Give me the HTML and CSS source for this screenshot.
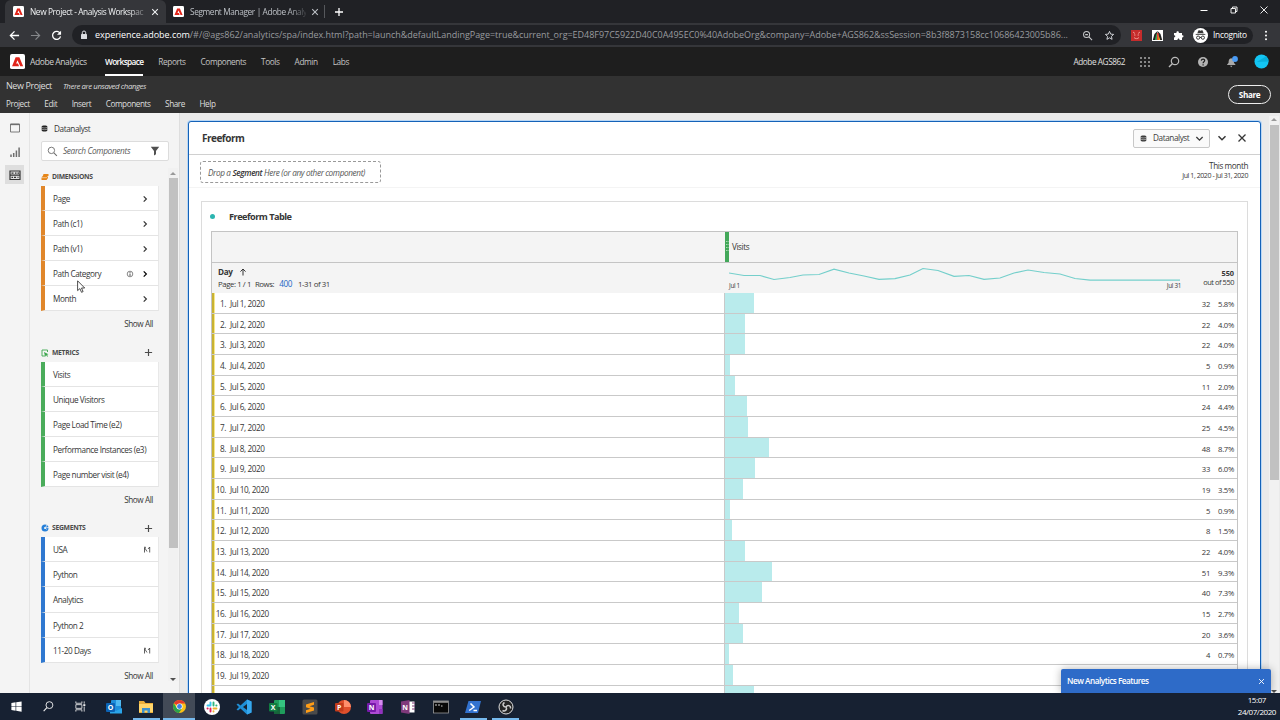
FILE: index.html
```html
<!DOCTYPE html>
<html lang="en">
<head>
    <meta charset="UTF-8">
    <meta name="viewport" content="width=device-width, initial-scale=1.0">
    <title>New Project - Analysis Workspace</title>
    <link rel="stylesheet" href="styles.css">
</head>
<body>
    <!-- shared icons -->
    <svg class="defs" width="0" height="0">
        <symbol id="adobe" viewBox="0 0 16 16">
            <rect width="16" height="16" rx="2" fill="#fff"/>
            <path d="M6 3.500h4l4 9.500h-3L8 6.600 6.500 10h2l1.200 3H2.200z" fill="#e1251b"/>
        </symbol>
        <symbol id="close" viewBox="0 0 10 10"><path d="M1.500 1.500l7 7M8.500 1.500l-7 7" fill="none" stroke="currentColor" stroke-width="1.300"/></symbol>
        <symbol id="plus" viewBox="0 0 10 10"><path d="M5 1v8M1 5h8" fill="none" stroke="currentColor" stroke-width="1.300"/></symbol>
        <symbol id="right" viewBox="0 0 8 8"><path d="M2.700 1.300l2.700 2.700-2.700 2.700" fill="none" stroke="currentColor" stroke-width="1.200"/></symbol>
        <symbol id="down" viewBox="0 0 10 10"><path d="M1.500 3.300L5 6.800l3.500-3.500" fill="none" stroke="currentColor" stroke-width="1.500"/></symbol>
        <symbol id="data" viewBox="0 0 8 8">
            <path d="M.8 1.700C.8.200 7.200.200 7.200 1.700v4.600c0 1.500-6.400 1.500-6.400 0z" fill="currentColor"/>
            <path d="M1 2.800c1.500.7 4.500.7 6 0M1 4.800c1.500.7 4.500.7 6 0" fill="none" stroke="#f4f4f4" stroke-width=".6"/>
        </symbol>
        <symbol id="badge" viewBox="0 0 8 8"><path d="M1.500 6.500V1.500L4 5.500M5 3l1.700-2v5.500M1.500 1l1.500.5" fill="none" stroke="currentColor" stroke-width=".8"/></symbol>
    </svg>

    <div class="tab-strip">
        <div class="tab active">
            <svg class="favicon"><use href="#adobe"/></svg>
            <span class="tab-title">New Project - Analysis Workspac</span>
            <svg class="tab-close"><use href="#close"/></svg>
        </div>
        <div class="tab">
            <svg class="favicon"><use href="#adobe"/></svg>
            <span class="tab-title">Segment Manager | Adobe Analy</span>
            <svg class="tab-close"><use href="#close"/></svg>
        </div>
        <i class="tab-divider"></i>
        <svg class="new-tab"><use href="#plus"/></svg>
        <div class="window-buttons">
            <svg viewBox="0 0 10 10"><path d="M1.500 5.500h7" stroke="#fff"/></svg>
            <svg viewBox="0 0 10 10"><path d="M2 3.500h4.500V8H2zM3.500 3.500V2H8v4.500H6.500" fill="none" stroke="#fff" stroke-width=".9"/></svg>
            <svg viewBox="0 0 10 10"><path d="M1.500 1.500l7 7M8.500 1.500l-7 7" stroke="#fff" stroke-width=".9"/></svg>
        </div>
    </div>

    <div class="toolbar">
        <svg class="nav-icon" viewBox="0 0 12 12"><path d="M11 6H1.800M6 1.500L1.500 6 6 10.500" fill="none" stroke="#fff" stroke-width="1.400"/></svg>
        <svg class="nav-icon" viewBox="0 0 12 12"><path d="M1 6h9.200M6 1.500L10.500 6 6 10.500" fill="none" stroke="#85878a" stroke-width="1.300"/></svg>
        <svg class="nav-icon" viewBox="0 0 12 12"><path d="M10 3.800A4.400 4.400 0 1 0 10.400 7" fill="none" stroke="#fff" stroke-width="1.400"/><path d="M11 .8v4.500H6.500z" fill="#fff"/></svg>
        <div class="address">
            <svg class="lock" viewBox="0 0 8 10"><rect x="1" y="4" width="6" height="5" rx=".6" fill="#dadce0"/><path d="M2.300 4V2.700a1.700 1.700 0 0 1 3.400 0V4" fill="none" stroke="#dadce0"/></svg>
            <span class="url"><b>experience.adobe.com</b>/#/@ags862/analytics/spa/index.html?path=launch&amp;defaultLandingPage=true&amp;current_org=ED48F97C5922D40C0A495EC0%40AdobeOrg&amp;company=Adobe+AGS862&amp;ssSession=8b3f8873158cc10686423005b86...</span>
            <svg class="zoom" viewBox="0 0 12 12"><circle cx="5" cy="5" r="3.300" fill="none" stroke="#c8c9cb" stroke-width="1.100"/><path d="M7.500 7.500L11 11M3.500 5h3" stroke="#c8c9cb" stroke-width="1.200"/></svg>
            <svg class="star" viewBox="0 0 12 12"><path d="M6 1.500l1.300 3 3.200.3-2.400 2.200.7 3.200L6 8.500l-2.800 1.700.7-3.200L1.500 4.800l3.200-.3z" fill="none" stroke="#dadce0"/></svg>
        </div>
        <svg class="ext" viewBox="0 0 11 11"><rect width="11" height="11" fill="#c62c2c"/><path d="M2 2l2 1.500M9 2L7 3.500M3 5h1.500M6.500 5H8M3 7.500c1 1.500 4 1.500 5 0" fill="none" stroke="#f0a09b" stroke-width=".9"/></svg>
        <svg class="ext" viewBox="0 0 11 11"><rect width="11" height="11" fill="#fff"/><path d="M5.500 1L2.500 4 .8 10H4z" fill="#222"/><path d="M5.500 1l3 3 1.700 6H7z" fill="#222"/><path d="M5 3v7H3l1-5z" fill="#38a853"/><path d="M5 3h1.500l.7 7H5z" fill="#eb4335"/><path d="M6.500 5l1.700 5h-1.500z" fill="#fabc05"/></svg>
        <svg class="ext" viewBox="0 0 11 11"><path d="M1 3h2.500c-.8-2.300 3-2.300 2.300 0H9v2.400c2-.7 2 2.500 0 2V10H6.500c.2-2-2.200-2-2 0H1V7.500c1.800 0 1.800-2.200 0-2.200z" fill="#fff"/></svg>
        <div class="incognito">
            <svg viewBox="0 0 14 14"><circle cx="7" cy="7" r="7" fill="#fff"/><path d="M4.500 5l.8-2.500 1.700.4 1.700-.4.8 2.500M2.500 6h9" fill="#333" stroke="#333" stroke-width=".8"/><circle cx="4.800" cy="9" r="1.500" fill="none" stroke="#333" stroke-width=".9"/><circle cx="9.200" cy="9" r="1.500" fill="none" stroke="#333" stroke-width=".9"/><path d="M6.300 8.800h1.400" stroke="#333"/></svg>
            <span>Incognito</span>
        </div>
        <svg class="kebab" viewBox="0 0 4 12"><circle cx="2" cy="2" r="1.100"/><circle cx="2" cy="6" r="1.100"/><circle cx="2" cy="10" r="1.100"/></svg>
    </div>

    <header class="app-header">
        <svg class="app-logo"><use href="#adobe"/></svg>
        <span class="app-name">Adobe Analytics</span>
        <nav class="app-nav">
            <a class="selected">Workspace</a>
            <a>Reports</a>
            <a>Components</a>
            <a>Tools</a>
            <a>Admin</a>
            <a>Labs</a>
        </nav>
        <span class="org">Adobe AGS862</span>
        <div class="header-icons">
            <svg viewBox="0 0 12 12"><path d="M1 2h2M5 2h2M9 2h2M1 6h2M5 6h2M9 6h2M1 10h2M5 10h2M9 10h2" stroke="#aaa" stroke-width="1.600"/></svg>
            <svg viewBox="0 0 12 12"><circle cx="7" cy="5" r="3.700" fill="none" stroke="#bbb" stroke-width="1.200"/><path d="M4.300 7.700L1 11" stroke="#bbb" stroke-width="1.400"/></svg>
            <svg viewBox="0 0 12 12"><circle cx="6" cy="6" r="5" fill="#b4b4b4"/><path d="M4.300 4.600c.2-2 3.500-2 3.400 0C7.700 5.800 6.100 5.800 6.100 7.200M6.100 8.200v1.300" fill="none" stroke="#1e1e1e" stroke-width="1.200"/></svg>
            <svg viewBox="0 0 14 14"><path d="M1 10.500l2-2.500c0-3 .5-5 3-5.500 2.800.5 3.300 2.500 3.300 5.500l2 2.500z" fill="#aaa"/><path d="M4.700 11.500h2.800l-1.400 1.500z" fill="#aaa"/><circle cx="10.500" cy="3.500" r="3.400" fill="#4b9cf5"/></svg>
            <svg class="avatar" viewBox="0 0 16 16"><circle cx="8" cy="8" r="7.500" fill="#13c5f3"/><path d="M3 8.500L13 2.500a7.500 7.500 0 0 1 2.500 5.500z" fill="#08afdc"/></svg>
        </div>
    </header>

    <div class="project-bar">
        <div class="project-info">
            <div class="project-title"><span>New Project</span><em>There are unsaved changes</em></div>
            <nav class="menu">
                <a>Project</a>
                <a>Edit</a>
                <a>Insert</a>
                <a>Components</a>
                <a>Share</a>
                <a>Help</a>
            </nav>
        </div>
        <button class="share">Share</button>
    </div>

    <main class="workspace">
        <div class="rail">
            <div class="rail-btn"><svg viewBox="0 0 12 12"><path d="M1.500 2h9v8h-9z" fill="none" stroke="#6e6e6e" stroke-width=".9"/><path d="M1.500 2.500h9" stroke="#6e6e6e" stroke-width="1.300"/></svg></div>
            <div class="rail-btn"><svg viewBox="0 0 12 12"><path d="M2 8.500V11M4.700 7v4M7.400 4.500V11M10.100 1.500V11" stroke="#6e6e6e" stroke-width="1.500"/></svg></div>
            <div class="rail-btn on"><svg viewBox="0 0 12 12"><path d="M1 2h10v8.500H1zM1 6.200h10" fill="none" stroke="#333" stroke-width="1.200"/><path d="M2.500 4.200h2M6 4.200h1.500M8.500 4.200h1.500M2.500 8.300h1.500M5 8.300h2M8.500 8.300h1" stroke="#333" stroke-width="1.300"/></svg></div>
        </div>

        <aside class="components">
            <div class="suite"><svg><use href="#data"/></svg>Datanalyst</div>
            <div class="search">
                <svg class="search-icon" viewBox="0 0 12 12"><circle cx="4.800" cy="4.800" r="3.500" fill="none" stroke="#6e6e6e"/><path d="M7.500 7.500l3.300 3.300" stroke="#6e6e6e" stroke-width="1.100"/></svg>
                <em>Search Components</em>
                <svg class="filter" viewBox="0 0 10 10"><path d="M.8.800h8.400L6 5v3.200L4 9.600V5z" fill="#505050"/></svg>
            </div>
            <div class="component-scroll">
                <div class="sections">
                    <section class="dimensions">
                        <h4><svg viewBox="0 0 8 8"><path d="M2.500 1h5v1.500L6 4H1.500z" fill="#e68619"/><path d="M1 3.500l6-.5v2L5.500 7H.5V5.500z" fill="#e68619"/><path d="M1 4.700h4.500l1.300-1.500" fill="none" stroke="#fff" stroke-width=".5"/></svg>DIMENSIONS</h4>
                        <ul>
                            <li>Page<svg class="go"><use href="#right"/></svg></li>
                            <li>Path (c1)<svg class="go"><use href="#right"/></svg></li>
                            <li>Path (v1)<svg class="go"><use href="#right"/></svg></li>
                            <li class="hover">Path Category<svg class="info" viewBox="0 0 8 8"><circle cx="4" cy="4" r="2.800" fill="none" stroke="#555" stroke-width=".7"/><path d="M4 2v.9M4 3.500V6" stroke="#555"/></svg><svg class="go"><use href="#right"/></svg></li>
                            <li>Month<svg class="go"><use href="#right"/></svg></li>
                        </ul>
                        <a class="show-all">Show All</a>
                    </section>
                    <section class="metrics">
                        <h4><svg viewBox="0 0 8 8"><path d="M4.500 7H1V1h5.500v2" fill="none" stroke="#3da74e" stroke-width=".9"/><path d="M3 3l4.500 2.200-1.500.6 1 1.500-.8.500-1-1.500-1.200 1z" fill="#3da74e"/></svg>METRICS<svg class="add"><use href="#plus"/></svg></h4>
                        <ul>
                            <li>Visits</li>
                            <li>Unique Visitors</li>
                            <li>Page Load Time (e2)</li>
                            <li>Performance Instances (e3)</li>
                            <li>Page number visit (e4)</li>
                        </ul>
                        <a class="show-all">Show All</a>
                    </section>
                    <section class="segments">
                        <h4><svg viewBox="0 0 8 8"><circle cx="4" cy="4" r="3.500" fill="#2680d9"/><path d="M4.500 3.500L6.500.2M4 4l4-.5M4 4l1.500 1.500" stroke="#f4f4f4" stroke-width=".8"/><circle cx="4" cy="4" r="1" fill="#f4f4f4"/></svg>SEGMENTS<svg class="add"><use href="#plus"/></svg></h4>
                        <ul>
                            <li>USA<svg class="adobe-badge"><use href="#badge"/></svg></li>
                            <li>Python</li>
                            <li>Analytics</li>
                            <li>Python 2</li>
                            <li>11-20 Days<svg class="adobe-badge"><use href="#badge"/></svg></li>
                        </ul>
                        <a class="show-all">Show All</a>
                    </section>
                </div>
                <div class="scrollbar"><i class="up"></i><div class="thumb"></div><i class="dn"></i></div>
            </div>
        </aside>

        <div class="canvas">
            <div class="panel">
                <div class="panel-head">
                    <h2>Freeform</h2>
                    <button class="suite-picker"><svg class="data"><use href="#data"/></svg>Datanalyst<svg class="caret"><use href="#down"/></svg></button>
                    <svg class="collapse"><use href="#down"/></svg>
                    <svg class="dismiss"><use href="#close"/></svg>
                </div>
                <div class="panel-filters">
                    <div class="drop-zone">Drop a <b>Segment</b> Here (or any other component)</div>
                    <div class="date-range"><span>This month</span><small>Jul 1, 2020 - Jul 31, 2020</small></div>
                </div>
                <div class="viz">
                    <div class="viz-title"><i></i>Freeform Table</div>
                    <div class="table">
                        <div class="columns">
                            <div></div>
                            <div class="metric"><svg viewBox="0 0 4 30"><rect width="4" height="30" fill="#43a85a"/><path d="M1.500 9v12M3 9v12" stroke="#d6eeda" stroke-width=".7" stroke-dasharray="1 2"/></svg>Visits</div>
                        </div>
                        <div class="summary">
                            <div class="day-head">
                                <div><b>Day</b><svg viewBox="0 0 8 8"><path d="M4 7.500V1.200M1.500 3.600L4 1l2.500 2.600" fill="none" stroke="#333"/></svg></div>
                                <div class="paging"><span>Page: 1 / 1</span><span>Rows:</span><a>400</a><span>1-31 of 31</span></div>
                            </div>
                            <div class="trend">
                                <div class="spark">
                                    <svg viewBox="0 0 452 16"><polyline points="0,6 15,8.500 31,8.500 45,12.500 61,10.500 74,8 90,7.500 105,2.200 120,6 135,9 150,12.300 166,11.700 181,8 194,1.500 209,3.500 225,9.300 240,8.500 255,12.300 271,11 285,6 299,3 315,5.500 331,7 346,11.500 361,13.200 451,13.200" fill="none" stroke="#74cfcb" stroke-width="1.200"/></svg>
                                    <div class="spark-labels"><span>Jul 1</span><span>Jul 31</span></div>
                                </div>
                                <div class="total"><b>550</b><span>out of 550</span></div>
                            </div>
                        </div>
                        <div id="rows"></div>
                    </div>
                </div>
            </div>
            <div class="scrollbar"><i class="up"></i><div class="thumb"></div><i class="dn"></i></div>
            <div class="toast">New Analytics Features<svg><use href="#close"/></svg></div>
        </div>
    </main>

    <footer class="taskbar">
        <div class="app"><svg viewBox="0 0 14 14"><path d="M1.500 3.200l4.500-.7v4.200H1.500zM6.700 2.400l5.800-.9v5.200H6.700zM1.500 7.400H6v4.200l-4.500-.7zM6.700 7.400h5.800v5.200l-5.800-.9z" fill="#fff"/></svg></div>
        <div class="app"><svg viewBox="0 0 14 14"><circle cx="8" cy="5.500" r="3.700" fill="none" stroke="#eee"/><path d="M5.300 8.300L1.800 12" stroke="#eee" stroke-width="1.200"/></svg></div>
        <div class="app task-view"><svg viewBox="0 0 14 14"><path d="M2 1.500v2h6.500v-2M2 12.500v-2h6.500v2M2 5h6.500v4H2zM11 1.500v2.500M11 7v5.500" fill="none" stroke="#eee" stroke-width=".9"/><path d="M10 4.500h2.200v2H10z" fill="#eee"/></svg></div>
        <div class="app"><svg class="wide" viewBox="0 0 16 16"><rect x="5" y="1" width="10" height="13" rx="1" fill="#1f8fdb"/><rect x="10" y="1" width="5" height="6" fill="#50b9f0"/><path d="M4 9l6 3 6-3v5.500H4z" fill="#2aa5ea"/><rect x="0" y="4" width="9" height="9" rx="1" fill="#0c63b5"/><text x="4.500" y="11" class="ico">O</text></svg></div>
        <div class="app running"><svg class="wide" viewBox="0 0 16 16"><path d="M1 2h5l1.500 2H15v10H1z" fill="#e9ae3c"/><path d="M1 5h14v8H1z" fill="#ffd56b"/><path d="M4 14V9h8v5h-2.500v-2.500h-3V14z" fill="#3d91ce"/></svg></div>
        <div class="app running current"><svg viewBox="0 0 14 14"><circle cx="7" cy="7" r="7" fill="#fbc116"/><path d="M7 7L.9 3.600A7 7 0 0 1 13.200 3.800H7z" fill="#e33b2e"/><path d="M.9 3.600A7 7 0 0 0 6.400 14L10 8.500 7 10 4 8.500z" fill="#2ba24c"/><circle cx="7" cy="7" r="3.300" fill="#fff"/><circle cx="7" cy="7" r="2.600" fill="#3f7fe8"/></svg></div>
        <div class="app"><svg class="wide" viewBox="0 0 16 16"><circle cx="8" cy="8" r="8" fill="#fff"/><g stroke-width="1.900" stroke-linecap="round"><path d="M6.500 3.500v3M3.500 6.500h3" stroke="#36c5f0"/><path d="M9.500 3.500v3M12.500 6.500h-.2" stroke="#2eb67d"/><path d="M9.500 9.500h3M9.500 12.500v-.2" stroke="#ecb22e"/><path d="M6.500 9.500v3M3.500 9.500h.2" stroke="#e01e5a"/></g></svg></div>
        <div class="app"><svg class="wide" viewBox="0 0 16 16"><path d="M11 .5L4.500 6.500 2 4.500.5 5.500 3 8 .5 10.500l1.500 1L4.500 9.500l6.500 6 4.500-2v-11z" fill="#1f8fd6"/><path d="M11 5L7 8l4 3z" fill="#172230"/><path d="M11 .5l4.500 2v11l-4.500 2z" fill="#37a8ee"/></svg></div>
        <div class="app"><svg class="wide" viewBox="0 0 16 16"><rect x="5" y="1" width="11" height="14" rx="1" fill="#1f9d5c"/><path d="M10 1h6v7h-6z" fill="#35c481"/><path d="M5 8h6v7H5z" fill="#17643a"/><rect y="4" width="8.500" height="8.500" rx="1" fill="#107c41"/><text x="4.200" y="11" class="ico">X</text></svg></div>
        <div class="app"><svg class="wide" viewBox="0 0 16 16"><rect x=".5" y=".5" width="15" height="15" rx="1.500" fill="#4a4a4a"/><path d="M4 5.500L12 3v2.700L7.500 7.200 12 8.600v2.900L4 14v-2.700l4.500-1.500L4 8.300z" fill="#ff9d16"/></svg></div>
        <div class="app"><svg class="wide" viewBox="0 0 16 16"><circle cx="9" cy="8" r="7" fill="#e0502c"/><path d="M9 1a7 7 0 0 1 7 7H9z" fill="#ff8f6b"/><rect y="4" width="8.500" height="8.500" rx="1" fill="#c13b1b"/><text x="4.300" y="11" class="ico">P</text></svg></div>
        <div class="app"><svg class="wide" viewBox="0 0 16 16"><rect x="3" y="1" width="12.500" height="14" rx="1" fill="#ae4bd5"/><path d="M12 1h3.500v5H12z" fill="#d58bf0"/><path d="M12 10h3.500v5H12z" fill="#9332bf"/><rect y="4" width="9" height="9" rx="1" fill="#7719aa"/><text x="4.500" y="11.300" class="ico">N</text></svg></div>
        <div class="app"><svg class="wide" viewBox="0 0 16 16"><path d="M8 2.500h6.500v11H8z" fill="#fff"/><path d="M12 4h3M12 7h3M12 10h3" stroke="#80397b"/><path d="M1 2.500L9.500 1v14L1 13.500z" fill="#80397b"/><text x="5.200" y="10.800" class="ico">N</text></svg></div>
        <div class="app"><svg class="wide" viewBox="0 0 16 16"><rect x=".5" y="2" width="15" height="12" fill="#080808" stroke="#999" stroke-width=".8"/><path d="M1 3h14" stroke="#ddd"/><path d="M2 6h2M5 6h2M8 7h1.500" stroke="#ccc"/></svg></div>
        <div class="app running"><svg class="wide" viewBox="0 0 16 16"><path d="M3.500 2H16l-3 12H0z" fill="#3272cf"/><path d="M5.500 4.500L9 8l-4.800 3.500M8.500 11.500H12" fill="none" stroke="#fff" stroke-width="1.500"/></svg></div>
        <div class="app running"><svg class="wide" viewBox="0 0 16 16"><circle cx="8" cy="8" r="7" fill="#242424" stroke="#ddd"/><path d="M8 8C5 8 4 5 6.500 3.500M8 8c1.500-2.600 5-1.500 4.500 1.500M8 8c1.500 2.600-1 5-3.500 3.500" fill="none" stroke="#ccc" stroke-width="1.500"/></svg></div>
        <div class="clock"><span>15:07</span><span>24/07/2020</span></div>
    </footer>

    <svg class="pointer" viewBox="0 0 9 13"><path d="M.6.800v9.800l2.300-2 1.600 3.700 1.600-.7-1.600-3.600h3.200z" fill="#fff" stroke="#222" stroke-width=".8"/></svg>
    <script src="script.js"></script>
</body>
</html>
```
FILE: styles.css
```css
* {
    box-sizing: border-box;
}

body {
    margin: 0;
    width: 1280px;
    height: 720px;
    overflow: hidden;
    display: flex;
    flex-direction: column;
    font-family: "Open Sans", "Noto Sans", sans-serif;
    font-size: 8.2px;
    letter-spacing: -0.42px;
    line-height: 12px;
    color: #363636;
    white-space: nowrap;
}

svg {
    flex: none;
    display: block;
}

.defs {
    position: absolute;
}

/* browser */
.tab-strip {
    height: 23px;
    background: #202125;
    display: flex;
    align-items: center;
    color: #bdc1c6;
}

.tab {
    display: flex;
    align-items: center;
    width: 153px;
    height: 23px;
    padding-left: 7px;
}

.tab.active {
    width: 161px;
    margin-left: 5px;
    padding-left: 8px;
    background: #35363a;
    border-radius: 6px 6px 0 0;
    color: #f1f3f4;
}

.favicon {
    width: 11px;
    height: 11px;
    margin-right: 6px;
}

.tab-title {
    width: 116px;
    font-size: 8.3px;
    letter-spacing: -0.38px;
    -webkit-mask-image: linear-gradient(90deg, #000 85%, transparent 103%);
}

.tab-close {
    width: 8px;
    height: 8px;
    margin-left: 5px;
}

.tab-divider {
    width: 1px;
    height: 13px;
    margin-left: 5px;
    background: #56585c;
}

.new-tab {
    width: 10px;
    height: 10px;
    margin-left: 9px;
    color: #fff;
}

.window-buttons {
    display: flex;
    gap: 20px;
    margin-left: auto;
    margin-right: 11px;
    padding-bottom: 4px;
}

.window-buttons svg {
    width: 10px;
    height: 10px;
}

.toolbar {
    height: 24px;
    background: #35363a;
    display: flex;
    align-items: center;
    padding-left: 9px;
}

.nav-icon {
    width: 11px;
    height: 11px;
    margin-right: 10px;
}

.address {
    display: flex;
    flex: none;
    align-items: center;
    width: 1049px;
    height: 20px;
    border-radius: 10px;
    background: #202125;
}

.lock {
    width: 8px;
    height: 10px;
    margin: 0 7px 0 8px;
}

.url {
    width: 978px;
    font-size: 9px;
    letter-spacing: -0.032px;
    color: #999b9f;
}

.url b {
    font-weight: 400;
    color: #fff;
}

.zoom,
.star {
    width: 11px;
    height: 11px;
    margin-left: 9px;
}

.star {
    margin-left: 11px;
}

.ext {
    width: 11px;
    height: 11px;
    margin-left: 10px;
}

.incognito {
    display: flex;
    align-items: center;
    gap: 5px;
    width: 60px;
    height: 17px;
    margin-left: 9px;
    border-radius: 9px;
    background: #202125;
    color: #fff;
    font-size: 8.4px;
    letter-spacing: -0.28px;
}

.incognito svg {
    width: 15px;
    height: 15px;
}

.kebab {
    width: 4px;
    height: 11px;
    margin-left: 11px;
    fill: #fff;
}

/* analytics header */
.app-header {
    height: 29px;
    background: #1e1e1e;
    display: flex;
    align-items: center;
    padding-left: 10px;
    color: #c4c4c4;
}

.app-logo {
    width: 15px;
    height: 15px;
}

.app-name {
    width: 75px;
    margin-left: 5px;
    font-size: 8.5px;
    color: #d2d2d2;
}

.app-nav {
    display: flex;
    gap: 15px;
    height: 29px;
}

.app-nav a {
    line-height: 30px;
    font-size: 8.3px;
}

.app-nav .selected {
    color: #fff;
    font-weight: 600;
    letter-spacing: -0.65px;
    border-bottom: 2px solid #fff;
}

.org {
    margin-left: auto;
    color: #e0e0e0;
}

.header-icons {
    display: flex;
    align-items: center;
    gap: 17px;
    margin: 0 11px 0 14px;
}

.header-icons svg {
    width: 12px;
    height: 12px;
}

.header-icons .avatar {
    width: 15px;
    height: 15px;
    margin-left: -1px;
}

.project-bar {
    height: 37px;
    background: #323232;
    display: flex;
    align-items: center;
    justify-content: space-between;
    padding: 0 9px 0 6px;
    color: #dedede;
}

.project-title {
    display: flex;
    gap: 11px;
    align-items: center;
    height: 18px;
    font-size: 9px;
}

.project-title em {
    font-size: 7.8px;
}

.menu {
    display: flex;
    gap: 14.5px;
    height: 18px;
    align-items: center;
}

.share {
    width: 43px;
    height: 19px;
    padding: 0;
    border: 1px solid #eee;
    border-radius: 10px;
    background: none;
    color: #fff;
    font: 700 8.2px/12px "Open Sans", "Noto Sans", sans-serif;
    letter-spacing: -0.4px;
}

/* workspace */
.workspace {
    display: flex;
    height: 580px;
    background: #f4f4f4;
}

.rail {
    width: 30px;
    border-right: 1px solid #e4e4e4;
    padding: 5px 0 0 5px;
    display: flex;
    flex-direction: column;
    gap: 5px;
}

.rail-btn {
    width: 19px;
    height: 19px;
    display: flex;
    align-items: center;
    justify-content: center;
}

.rail-btn.on {
    margin-top: -1px;
    background: #dedede;
}

.rail-btn svg {
    width: 12px;
    height: 12px;
}

.components {
    width: 150px;
    padding-left: 11px;
    border-right: 1px solid #dedede;
}

.suite {
    display: flex;
    align-items: center;
    gap: 6px;
    height: 28px;
    padding-top: 3px;
}

.suite svg {
    width: 7px;
    height: 7px;
    color: #222;
}

.search {
    display: flex;
    align-items: center;
    width: 128px;
    height: 20px;
    border: 1px solid #dcdcdc;
    border-radius: 2px;
    background: #fff;
    padding: 0 8px 0 5px;
    color: #5a5a5a;
    font-size: 8.3px;
    letter-spacing: -0.36px;
}

.search-icon {
    width: 11px;
    height: 11px;
    margin-right: 5px;
}

.filter {
    width: 10px;
    height: 10px;
    margin-left: auto;
}

.component-scroll {
    display: flex;
    justify-content: space-between;
    margin-top: 7px;
    height: 520px;
}

.sections {
    width: 118px;
}

section {
    height: 175.5px;
}

h4 {
    display: flex;
    align-items: center;
    gap: 3px;
    height: 18px;
    margin: 0;
    font-size: 6.8px;
    font-weight: 700;
    color: #4b4b4b;
    letter-spacing: -0.3px;
}

h4 svg {
    width: 8px;
    height: 8px;
}

h4 .add {
    width: 9px;
    height: 9px;
    margin: 0 6px 0 auto;
}

ul {
    list-style: none;
    margin: 0;
    padding: 0;
}

li {
    display: flex;
    align-items: center;
    height: 25.2px;
    padding: 2px 9px 0 8px;
    background: #fff;
    border-left: 4px solid;
    border-bottom: 1px solid #e4e4e4;
    border-right: 1px solid #e8e8e8;
}

.dimensions li {
    height: 25px;
    border-left-color: #e0862a;
}

.metrics li {
    border-left-color: #4aac5b;
}

.segments li {
    border-left-color: #2f78d0;
}

.go,
.info,
.adobe-badge {
    width: 8px;
    height: 8px;
    margin-left: auto;
}

.info + .go {
    margin-left: 7px;
    color: #000;
}

.adobe-badge {
    margin-right: -2px;
}

.show-all {
    display: block;
    padding: 7px 6px 0 0;
    text-align: right;
}

.scrollbar {
    display: flex;
    flex-direction: column;
    align-items: center;
    width: 10px;
    background: #f1f1f1;
}

.components .scrollbar {
    margin-right: 1px;
    padding-top: 4px;
    height: 513px;
}

.thumb {
    width: 9px;
    background: #c1c1c1;
}

.components .thumb {
    height: 370px;
    margin-top: 3px;
}

.up,
.dn {
    border: 3px solid transparent;
}

.up {
    border-top: 0;
    border-bottom: 3px solid #999;
}

.dn {
    margin-top: auto;
    border-bottom: 0;
    border-top: 3px solid #505050;
}

.canvas {
    position: relative;
    display: flex;
    flex: 1;
    background: #eaeaea;
    padding: 8px 0 0 8px;
}

.panel {
    width: 1073px;
    height: 590px;
    background: #fff;
    border: 1px solid #1462b8;
    border-radius: 3px 3px 0 0;
    box-shadow: 0 0 0 1px #b9d7f5;
}

.panel-head {
    display: flex;
    align-items: center;
    height: 33px;
    padding: 0 13px;
    border-bottom: 1px solid #d0d0d0;
}

h2 {
    margin: 0 auto 0 0;
    font-size: 10px;
    font-weight: 700;
    letter-spacing: -0.5px;
}

.suite-picker {
    display: flex;
    align-items: center;
    width: 77px;
    height: 19px;
    padding: 0 0 0 6px;
    border: 1px solid #c8c8c8;
    border-radius: 2px;
    background: #fafafa;
    color: #3c3c3c;
    font: 8.2px/12px "Open Sans", "Noto Sans", sans-serif;
    letter-spacing: -0.42px;
}

.suite-picker .data {
    width: 7px;
    height: 7px;
    margin-right: 6px;
}

.caret {
    width: 9px;
    height: 9px;
    margin-left: 6px;
}

.collapse {
    width: 10px;
    height: 10px;
    margin: 0 10px 0 7px;
}

.dismiss {
    width: 10px;
    height: 10px;
}

.panel-filters {
    display: flex;
    justify-content: space-between;
    height: 33px;
    padding: 6px 12px 0 11px;
    border-bottom: 1px solid #f4f4f4;
}

.drop-zone {
    width: 181px;
    height: 22px;
    border: 1px dashed #999;
    border-radius: 3px;
    padding-left: 7px;
    line-height: 21px;
    font-style: italic;
    font-size: 8.2px;
    letter-spacing: -0.36px;
    color: #555;
}

.drop-zone b {
    font-weight: 600;
    color: #333;
}

.date-range {
    text-align: right;
    display: flex;
    flex-direction: column;
    line-height: 10px;
}

.date-range small {
    font-size: 7px;
}

.viz {
    width: 1047px;
    height: 520px;
    margin: 13px 0 0 12px;
    border: 1px solid #dcdcdc;
    padding-left: 9px;
}

.viz-title {
    display: flex;
    align-items: center;
    height: 29px;
    font-size: 9.2px;
    font-weight: 700;
    letter-spacing: -0.53px;
}

.viz-title i {
    width: 5px;
    height: 5px;
    border-radius: 50%;
    background: #2bb5b0;
    margin: 0 14px 0 -1px;
}

.table {
    width: 1027px;
    border: 1px solid #c4c4c4;
}

.columns,
.summary,
.row {
    display: grid;
    grid-template-columns: 513px 1fr;
}

.columns {
    height: 31px;
    background: #f4f4f4;
    border-bottom: 1px solid #c4c4c4;
}

.metric {
    display: flex;
    align-items: center;
    gap: 3px;
}

.metric svg {
    width: 4px;
    height: 30px;
}

.summary {
    height: 30px;
    background: #f4f4f4;
}

.day-head {
    padding: 3px 0 0 6px;
}

.day-head div {
    display: flex;
    align-items: center;
}

.day-head svg {
    width: 8px;
    height: 8px;
    margin-left: 7px;
}

.day-head .paging {
    gap: 4px;
    font-size: 7.8px;
}

.paging a {
    color: #2268c4;
    font-size: 8.2px;
    margin: 0 2px 0 1px;
}

.trend {
    display: flex;
    justify-content: space-between;
    padding: 4px 3px 0 4px;
}

.spark {
    width: 452px;
}

.spark-labels {
    display: flex;
    justify-content: space-between;
    font-size: 6.3px;
    letter-spacing: -0.3px;
    line-height: 6px;
}

.total {
    display: flex;
    flex-direction: column;
    align-items: flex-end;
    font-size: 7.4px;
    line-height: 9px;
    padding-top: 2px;
}

.total b {
    letter-spacing: -0.1px;
}

.row {
    height: 20.68px;
    border-bottom: 1px solid #c9c9c9;
    background: #fff;
}

.date {
    display: flex;
    align-items: center;
    gap: 4px;
    padding-top: 2px;
    border-left: 2px solid #c8b233;
    border-right: 1px solid #c9c9c9;
    box-shadow: inset 1px 0 #f7e88a;
}

.date span {
    width: 12px;
    text-align: right;
}

.value {
    display: flex;
    align-items: center;
    font-size: 7.7px;
    letter-spacing: -0.3px;
    padding-right: 3px;
}

.bar {
    height: 100%;
    background: #b9ebec;
    margin-right: auto;
}

.value b {
    font-weight: 400;
    width: 24px;
    padding-top: 2px;
    text-align: right;
}

.canvas > .scrollbar {
    margin: -5px 0 0 8px;
    height: 577px;
    padding-top: 2px;
}

.canvas .thumb {
    height: 355px;
    margin-top: 4px;
}

.toast {
    position: absolute;
    right: 9px;
    bottom: 0;
    width: 210px;
    height: 24px;
    display: flex;
    align-items: center;
    justify-content: space-between;
    padding: 0 6px;
    border-radius: 2px 2px 0 0;
    background: #2e6bc8;
    color: #fff;
    font-weight: 600;
    letter-spacing: -0.48px;
    box-shadow: 0 0 8px rgba(0, 0, 0, 0.3);
}

.toast svg {
    width: 7px;
    height: 7px;
}

/* windows taskbar */
.taskbar {
    position: relative;
    height: 27px;
    background: #172132;
    display: flex;
}

.app {
    width: 32.7px;
    height: 27px;
    display: flex;
    align-items: center;
    justify-content: center;
}

.app:first-child {
    width: 32px;
}

.app svg {
    width: 13px;
    height: 13px;
}

.app .wide {
    width: 16px;
    height: 16px;
}

.task-view {
    padding-right: 2px;
}

.ico {
    font: 700 7px "Open Sans", sans-serif;
    letter-spacing: 0;
    fill: #fff;
    text-anchor: middle;
}

.running {
    background: linear-gradient(#76b9ed, #76b9ed) center bottom / 27px 2px no-repeat;
}

.current {
    background: linear-gradient(#76b9ed, #76b9ed) center bottom / 100% 2px no-repeat, #424a57;
}

.clock {
    margin-left: auto;
    padding: 1px 4px 0 0;
    display: flex;
    flex-direction: column;
    align-items: center;
    color: #fff;
    font-size: 8px;
}

.pointer {
    position: absolute;
    left: 77px;
    top: 280px;
    width: 9px;
    height: 13px;
}
```
FILE: script.js
```js
const visits = [
    [32, '5.8%'], [22, '4.0%'], [22, '4.0%'], [5, '0.9%'], [11, '2.0%'],
    [24, '4.4%'], [25, '4.5%'], [48, '8.7%'], [33, '6.0%'], [19, '3.5%'],
    [5, '0.9%'], [8, '1.5%'], [22, '4.0%'], [51, '9.3%'], [40, '7.3%'],
    [15, '2.7%'], [20, '3.6%'], [4, '0.7%'], [9, '1.6%'], [31, '5.6%']
];

// bar length: 0.92px per visit
document.getElementById('rows').innerHTML = visits.map(([count, share], i) => `
    <div class="row">
        <div class="date"><span>${i + 1}.</span>Jul ${i + 1}, 2020</div>
        <div class="value"><div class="bar" style="width: ${(count * 0.92).toFixed(1)}px"></div><b>${count}</b><b>${share}</b></div>
    </div>`).join('');
```
